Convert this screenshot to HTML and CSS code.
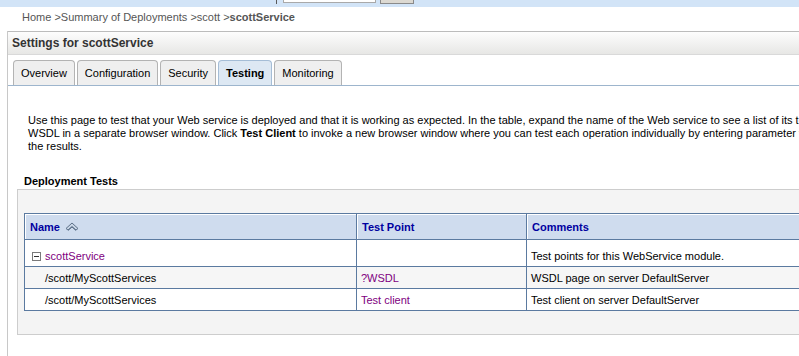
FILE: index.html
```html
<!DOCTYPE html>
<html lang="en">
<head>
    <meta charset="UTF-8">
    <title>Settings for scottService</title>
    <link rel="stylesheet" href="styles.css">
</head>
<body>
    <div class="topbar">
        <span class="divider"></span>
        <span class="search-box"></span>
        <span class="search-btn"></span>
    </div>

    <div class="breadcrumb">Home &gt;Summary of Deployments &gt;scott &gt;<b>scottService</b></div>

    <div class="panel">
        <div class="panel-title">Settings for scottService</div>

        <div class="tabs">
            <span class="tab">Overview</span>
            <span class="tab">Configuration</span>
            <span class="tab">Security</span>
            <span class="tab active">Testing</span>
            <span class="tab">Monitoring</span>
        </div>

        <div class="tab-body">
            <p class="intro">
                Use this page to test that your Web service is deployed and that it is working as expected. In the table, expand the name of the Web service to see a list of its test points. Click <b>?WSDL</b> to view the<br>
                WSDL in a separate browser window. Click <b>Test Client</b> to invoke a new browser window where you can test each operation individually by entering parameter values and viewing<br>
                the results.
            </p>

            <h3 class="table-title">Deployment Tests</h3>

            <div class="table-box">
                <table class="tests">
                    <colgroup>
                        <col class="col-name">
                        <col class="col-point">
                        <col class="col-comment">
                    </colgroup>
                    <thead>
                        <tr>
                            <th>Name
                                <svg class="sort-icon" width="14" height="10" viewBox="0 0 14 10">
                                    <path d="M1 6.5 L7 1 L13 6.5 L11 8 L7 4.5 L3 8 Z" fill="#c9d6e6" stroke="#5d7189" stroke-width="1"/>
                                    <path d="M3 8.5 L7 5 L11 8.5" fill="none" stroke="#5d7189" stroke-width="1"/>
                                </svg>
                            </th>
                            <th>Test Point</th>
                            <th>Comments</th>
                        </tr>
                    </thead>
                    <tbody>
                        <tr class="row-module">
                            <td class="name-cell">
                                <svg class="tree-toggle" width="9" height="9" viewBox="0 0 9 9">
                                    <rect x="0.5" y="0.5" width="8" height="8" fill="#fff" stroke="#7a7a7a"/>
                                    <path d="M2 4.5 H7" stroke="#333" stroke-width="1"/>
                                </svg>
                                <a href="#">scottService</a>
                            </td>
                            <td></td>
                            <td>Test points for this WebService module.</td>
                        </tr>
                        <tr class="row-alt">
                            <td class="indent">/scott/MyScottServices</td>
                            <td><a href="#">?WSDL</a></td>
                            <td>WSDL page on server DefaultServer</td>
                        </tr>
                        <tr>
                            <td class="indent">/scott/MyScottServices</td>
                            <td><a href="#">Test client</a></td>
                            <td>Test client on server DefaultServer</td>
                        </tr>
                    </tbody>
                </table>
            </div>
        </div>
    </div>
</body>
</html>
```

FILE: styles.css
```css
* {
    box-sizing: border-box;
}

body {
    margin: 0;
    overflow: hidden;
    font-family: "Liberation Sans", Arial, sans-serif;
    font-size: 11px;
    color: #000;
    background: #fff;
}

/* Top strip */
.topbar {
    height: 7px;
    background: #d2e4f7;
    display: flex;
    align-items: flex-start;
    padding-left: 276px;
}

.divider {
    width: 1px;
    height: 4px;
    background: #5a5a5a;
}

.search-box {
    width: 93px;
    height: 3px;
    margin-left: 6px;
    background: #fff;
    border: 1px solid #a9a9a9;
    border-top: none;
}

.search-btn {
    width: 34px;
    height: 4px;
    margin-left: 4px;
    background: #dcd9d2;
    border: 1px solid #8a8a8a;
    border-top: none;
}

/* Breadcrumb */
.breadcrumb {
    height: 24px;
    padding: 4px 0 0 22px;
    line-height: 13px;
    color: #555;
}

.breadcrumb b {
    color: #555;
}

/* Panel - the page is wider than the window, so it is clipped on the right */
.panel {
    margin-left: 7px;
    height: 325px;
    overflow: hidden;
    border-left: 1px solid #c8c8c8;
}

.panel-title {
    height: 24px;
    padding-left: 4px;
    line-height: 23px;
    font-size: 12px;
    font-weight: bold;
    color: #333;
    background: linear-gradient(#fdfdfd, #e7e7e5);
    border-top: 1px solid #bcbcbc;
    border-bottom: 1px solid #d9d9d9;
}

/* Tabs */
.tabs {
    display: flex;
    gap: 2px;
    padding: 5px 0 0 5px;
    border-bottom: 1px solid #9db5cd;
}

.tab {
    height: 25px;
    padding: 0 7px;
    line-height: 24px;
    background: #efefef;
    border: 1px solid #b3b3b3;
    border-bottom: none;
    border-radius: 4px 4px 0 0;
}

.tab.active {
    font-weight: bold;
    background: #dde8f3;
    border-color: #a5bdd6;
}

/* Tab content */
.tab-body {
    width: 1100px;
    padding: 28px 0 0 9px;
}

.intro {
    margin: 0 0 0 11px;
    line-height: 13px;
    white-space: nowrap;
}

.table-title {
    margin: 21px 0 1px 7px;
    font-size: 11px;
    line-height: 14px;
}

.table-box {
    padding: 23px 0 23px 6px;
    background: #f4f4f4;
    border: 1px solid #cdcdcd;
}

/* Table */
.tests {
    border-collapse: collapse;
    table-layout: fixed;
    width: 810px;
    background: #fff;
}

.col-name { width: 332px; }
.col-point { width: 170px; }
.col-comment { width: 308px; }

.tests th,
.tests td {
    border: 1px solid #5b7aa0;
    padding: 0 0 0 4px;
    text-align: left;
}

.tests th {
    height: 26px;
    padding-left: 5px;
    background: #cfdcee;
    color: #0000a0;
    font-weight: bold;
    box-shadow: inset 1px 1px 0 #fff;
}

.sort-icon {
    vertical-align: -1px;
    margin-left: 2px;
}

.tests td {
    height: 22px;
}

.row-module td {
    height: 27px;
    padding-top: 6px;
}

.row-alt td {
    background: #f6f6f6;
}

.name-cell {
    padding-left: 7px !important;
}

.tree-toggle {
    vertical-align: -1px;
    margin-right: 1px;
}

.indent {
    padding-left: 20px !important;
}

.tests a {
    color: #800080;
    text-decoration: none;
}
```
